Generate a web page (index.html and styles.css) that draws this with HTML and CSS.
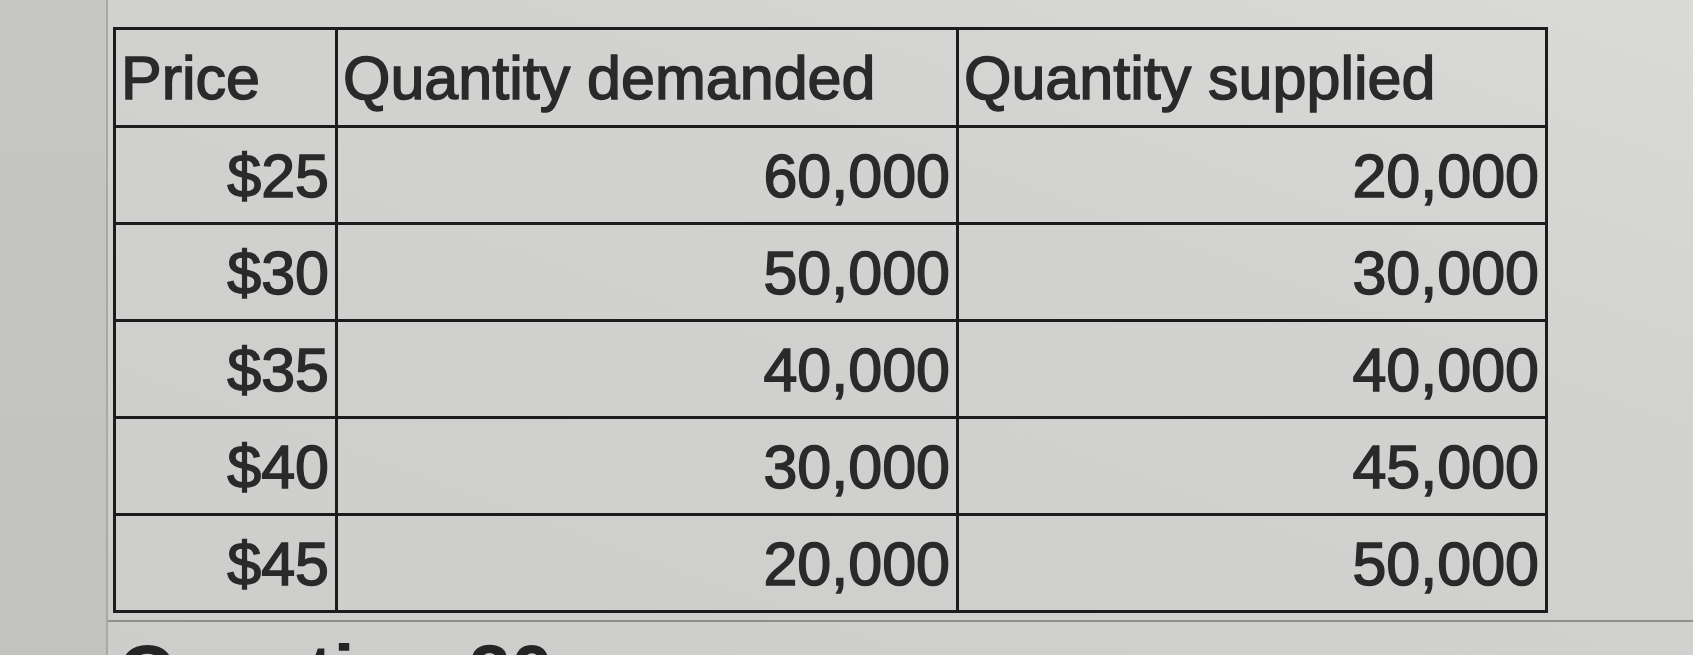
FILE: index.html
```html
<!DOCTYPE html>
<html lang="en">
<head>
<meta charset="utf-8">
<title>Supply and demand schedule</title>
<link rel="stylesheet" href="styles.css">
</head>
<body>
<div class="desk">
  <div class="paper">
    <table class="schedule">
      <colgroup>
        <col class="c-price">
        <col class="c-demand">
        <col class="c-supply">
      </colgroup>
      <thead>
        <tr class="head-row">
          <th>Price</th>
          <th>Quantity demanded</th>
          <th>Quantity supplied</th>
        </tr>
      </thead>
      <tbody>
        <tr><td>$25</td><td>60,000</td><td>20,000</td></tr>
        <tr><td>$30</td><td>50,000</td><td>30,000</td></tr>
        <tr><td>$35</td><td>40,000</td><td>40,000</td></tr>
        <tr><td>$40</td><td>30,000</td><td>45,000</td></tr>
        <tr><td>$45</td><td>20,000</td><td>50,000</td></tr>
      </tbody>
    </table>
    <div class="question-box">
      <h2 class="question-title">Question 20</h2>
    </div>
  </div>
</div>
</body>
</html>
```

FILE: styles.css
```css
html, body {
  margin: 0;
  padding: 0;
}

body {
  width: 1693px;
  height: 655px;
  overflow: hidden;
  background: #c4c5c1;
  font-family: "Liberation Sans", Arial, sans-serif;
  color: #2a2a2a;
}

.desk {
  height: 655px;
  padding-left: 106px;
  background: linear-gradient(180deg, #c6c7c3 0%, #c2c3bf 100%);
}

.paper {
  height: 655px;
  border-left: 2px solid #a9aaa6;
  background: linear-gradient(200deg, #dadbd8 0%, #d2d3d0 35%, #cdcecb 100%);
  padding-top: 27px;
  box-sizing: border-box;
}

.schedule {
  margin-left: 5px;
  width: 1432px;
  table-layout: fixed;
  border-collapse: collapse;
  border: 3px solid #1c1c1c;
}

.c-price { width: 222px; }
.c-demand { width: 621px; }
.c-supply { width: 589px; }

.schedule th,
.schedule td {
  border: 3px solid #1c1c1c;
  font-size: 61px;
  line-height: 62px;
  font-weight: normal;
  -webkit-text-stroke: 1.5px #2a2a2a;
  vertical-align: top;
  box-sizing: border-box;
  white-space: nowrap;
}

.schedule th {
  height: 98px;
  padding: 17px 4px 0 5px;
  text-align: left;
}

.schedule td {
  height: 97px;
  padding: 17px 6px 0 4px;
  text-align: right;
}

.question-box {
  margin-top: 7px;
  border-top: 2px solid #8e8f8b;
  padding: 12px 0 0 10px;
}

.question-title {
  margin: 0;
  font-size: 76px;
  line-height: 76px;
  font-weight: bold;
  color: #242424;
}
```
